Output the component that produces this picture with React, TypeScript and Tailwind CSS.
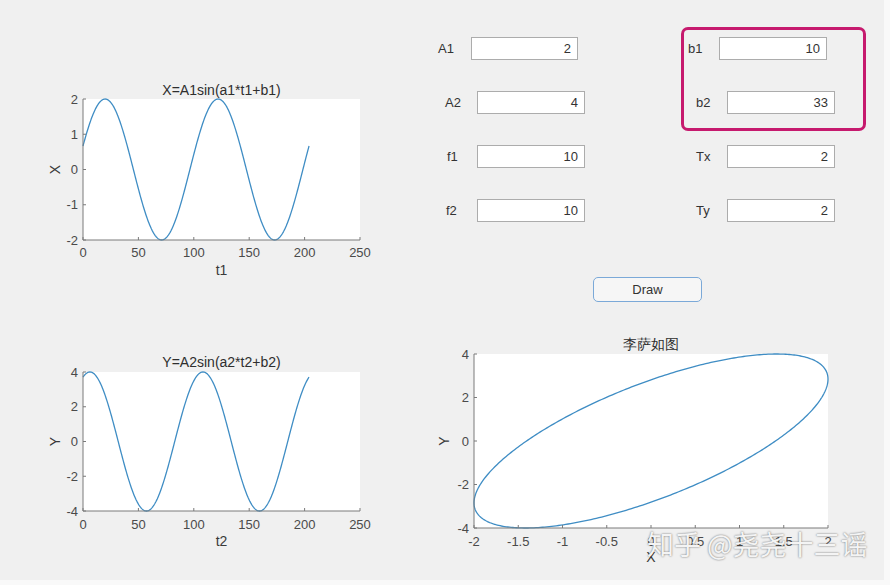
import React from "react";

const FONT = "'Liberation Sans', Arial, sans-serif";
const LINE = "#3f8dc4";
const AXIS = "#7a7a7a";
const TICK_TEXT = "#4a4a4a";

type Tick = { v: number; label: string };

type PlotProps = {
  width: number;
  height: number;
  box: { x0: number; x1: number; y0: number; y1: number };
  xRange: [number, number];
  yRange: [number, number];
  xTicks: Tick[];
  yTicks: Tick[];
  title: string;
  titleY: number;
  xLabel: string;
  xLabelY: number;
  yLabel: string;
  yLabelX: number;
  tickLabelY: number;
  points: [number, number][];
};

const Plot = ({
  width,
  height,
  box,
  xRange,
  yRange,
  xTicks,
  yTicks,
  title,
  titleY,
  xLabel,
  xLabelY,
  yLabel,
  yLabelX,
  tickLabelY,
  points,
}: PlotProps) => {
  const sx = (v: number) =>
    box.x0 + ((v - xRange[0]) / (xRange[1] - xRange[0])) * (box.x1 - box.x0);
  const sy = (v: number) =>
    box.y1 - ((v - yRange[0]) / (yRange[1] - yRange[0])) * (box.y1 - box.y0);
  const d = points
    .map(([x, y], i) => `${i ? "L" : "M"}${sx(x).toFixed(2)},${sy(y).toFixed(2)}`)
    .join(" ");
  const cx = (box.x0 + box.x1) / 2;
  const cy = (box.y0 + box.y1) / 2;

  return (
    <svg width={width} height={height} className="block" style={{ fontFamily: FONT }}>
      <rect x={box.x0} y={box.y0} width={box.x1 - box.x0} height={box.y1 - box.y0} fill="#ffffff" />
      <text x={cx} y={titleY} textAnchor="middle" fontSize="14" fill="#2e2e2e">
        {title}
      </text>
      <path d={d} fill="none" stroke={LINE} strokeWidth="1.3" strokeLinejoin="round" />
      <line x1={box.x0} y1={box.y1} x2={box.x1} y2={box.y1} stroke={AXIS} strokeWidth="1" />
      <line x1={box.x0} y1={box.y0} x2={box.x0} y2={box.y1} stroke={AXIS} strokeWidth="1" />
      {xTicks.map((t) => (
        <g key={"x" + t.label}>
          <line x1={sx(t.v)} y1={box.y1} x2={sx(t.v)} y2={box.y1 - 3} stroke={AXIS} />
          <text x={sx(t.v)} y={tickLabelY} textAnchor="middle" fontSize="13" fill={TICK_TEXT}>
            {t.label}
          </text>
        </g>
      ))}
      {yTicks.map((t) => (
        <g key={"y" + t.label}>
          <line x1={box.x0} y1={sy(t.v)} x2={box.x0 + 3} y2={sy(t.v)} stroke={AXIS} />
          <text
            x={box.x0 - 5}
            y={sy(t.v) + 4.5}
            textAnchor="end"
            fontSize="13"
            fill={TICK_TEXT}
          >
            {t.label}
          </text>
        </g>
      ))}
      <text x={cx} y={xLabelY} textAnchor="middle" fontSize="14" fill="#3a3a3a">
        {xLabel}
      </text>
      <text
        x={yLabelX}
        y={cy}
        textAnchor="middle"
        fontSize="14"
        fill="#3a3a3a"
        transform={`rotate(-90 ${yLabelX} ${cy})`}
        dominantBaseline="middle"
      >
        {yLabel}
      </text>
    </svg>
  );
};

const w = (2 * Math.PI) / 102;

const wave = (amp: number, phase: number): [number, number][] => {
  const pts: [number, number][] = [];
  for (let t = 0; t <= 204; t += 0.5) pts.push([t, amp * Math.sin(w * t + phase)]);
  return pts;
};

const lissajous = (): [number, number][] => {
  const pts: [number, number][] = [];
  const delta = 0.78;
  for (let i = 0; i <= 400; i++) {
    const th = (i / 400) * Math.PI * 2;
    pts.push([2 * Math.sin(th), 4 * Math.sin(th + delta)]);
  }
  return pts;
};

const tTicks: Tick[] = [0, 50, 100, 150, 200, 250].map((v) => ({ v, label: String(v) }));

const Field = ({ value, className }: { value: string; className: string }) => (
  <div
    className={`h-[23px] bg-white border border-[#acacac] flex items-center justify-end pr-[6px] text-[13px] text-[#333333] ${className}`}
  >
    {value}
  </div>
);

const Label = ({ text, className }: { text: string; className: string }) => (
  <span className={`text-[13px] text-[#333333] shrink-0 ${className}`}>{text}</span>
);

export default function App() {
  return (
    <div
      className="relative w-[890px] h-[585px] bg-[#f9f9f9] overflow-hidden"
      style={{ fontFamily: FONT }}
    >
      <div className="w-[884px] h-[580px] bg-[#f0f0f0] flex">
        {/* left: time plots */}
        <div className="w-[420px] shrink-0 flex flex-col pl-[40px] pt-[78px] gap-[67px]">
          <Plot
            width={340}
            height={205}
            box={{ x0: 43, x1: 320, y0: 21, y1: 162 }}
            xRange={[0, 250]}
            yRange={[-2, 2]}
            xTicks={tTicks}
            yTicks={[2, 1, 0, -1, -2].map((v) => ({ v, label: String(v) }))}
            title="X=A1sin(a1*t1+b1)"
            titleY={17}
            xLabel="t1"
            xLabelY={197}
            yLabel="X"
            yLabelX={16}
            tickLabelY={179}
            points={wave(2, 0.34)}
          />
          <Plot
            width={340}
            height={205}
            box={{ x0: 43, x1: 320, y0: 22, y1: 161 }}
            xRange={[0, 250]}
            yRange={[-4, 4]}
            xTicks={tTicks}
            yTicks={[4, 2, 0, -2, -4].map((v) => ({ v, label: String(v) }))}
            title="Y=A2sin(a2*t2+b2)"
            titleY={17}
            xLabel="t2"
            xLabelY={196}
            yLabel="Y"
            yLabelX={16}
            tickLabelY={179}
            points={wave(4, 1.184)}
          />
        </div>

        {/* right: parameters, button, lissajous */}
        <div className="flex-1 flex flex-col pt-[37px]">
          <div className="flex flex-col gap-[31px]">
            <div className="flex items-center">
              <Label text="A1" className="ml-[18px] w-[33px]" />
              <Field value="2" className="w-[107px]" />
              <Label text="b1" className="ml-[110px] w-[31px]" />
              <Field value="10" className="w-[108px]" />
            </div>
            <div className="flex items-center">
              <Label text="A2" className="ml-[25px] w-[32px]" />
              <Field value="4" className="w-[108px]" />
              <Label text="b2" className="ml-[111px] w-[31px]" />
              <Field value="33" className="w-[108px]" />
            </div>
            <div className="flex items-center">
              <Label text="f1" className="ml-[27px] w-[30px]" />
              <Field value="10" className="w-[108px]" />
              <Label text="Tx" className="ml-[111px] w-[31px]" />
              <Field value="2" className="w-[108px]" />
            </div>
            <div className="flex items-center">
              <Label text="f2" className="ml-[26px] w-[31px]" />
              <Field value="10" className="w-[108px]" />
              <Label text="Ty" className="ml-[111px] w-[31px]" />
              <Field value="2" className="w-[108px]" />
            </div>
          </div>

          <button className="mt-[55px] ml-[173px] w-[109px] h-[25px] rounded-[5px] border border-[#7ba9d8] bg-[#f6f6f6] text-[13px] text-[#333333] flex items-center justify-center">
            Draw
          </button>

          <div className="mt-[28px] ml-[10px]">
            <Plot
              width={430}
              height={240}
              box={{ x0: 44, x1: 398, y0: 24, y1: 198 }}
              xRange={[-2, 2]}
              yRange={[-4, 4]}
              xTicks={[-2, -1.5, -1, -0.5, 0, 0.5, 1, 1.5, 2].map((v) => ({
                v,
                label: String(v),
              }))}
              yTicks={[4, 2, 0, -2, -4].map((v) => ({ v, label: String(v) }))}
              title="李萨如图"
              titleY={19}
              xLabel="X"
              xLabelY={232}
              yLabel="Y"
              yLabelX={15}
              tickLabelY={216}
              points={lissajous()}
            />
          </div>
        </div>
      </div>

      {/* annotation box */}
      <div className="absolute left-[681px] top-[27px] w-[185px] h-[104px] border-[3px] border-[#c61a6e] rounded-[7px]" />

      {/* watermark */}
      <div
        className="absolute left-[647px] top-[526px] text-[27px] leading-[36px] text-[#f4f4f4] whitespace-nowrap [text-shadow:0_0_2px_rgba(0,0,0,0.6)]"
        style={{ fontFamily: "'Noto Sans CJK SC', 'Noto Sans', sans-serif" }}
      >
        知乎 @尧尧十三谣
      </div>
    </div>
  );
}
